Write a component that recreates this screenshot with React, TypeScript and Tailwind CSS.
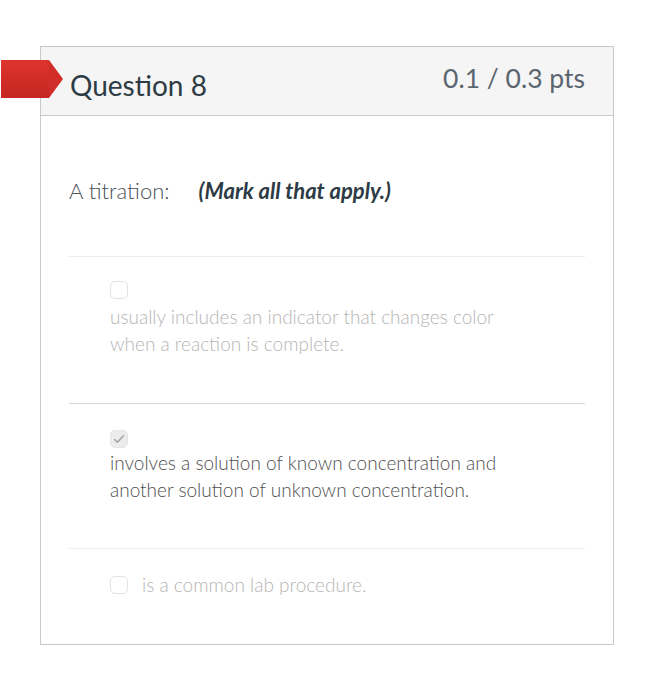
const font = { fontFamily: 'Lato, "Open Sans", sans-serif' };

interface BoxProps {
  checked?: boolean;
}

const Box = ({ checked }: BoxProps) => (
  <span
    className={
      'inline-flex h-[18px] w-[18px] shrink-0 items-center justify-center rounded-[5px] border ' +
      (checked ? 'border-[#e6e6e6] bg-[#ececec]' : 'border-[#e2e2e2] bg-white')
    }
  >
    {checked && (
      <svg viewBox="0 0 16 16" className="h-[14px] w-[14px]" fill="none" stroke="#a0a0a0" strokeWidth="1.6" strokeLinecap="round" strokeLinejoin="round">
        <path d="M3 8.5l3.2 3.3L13 4.2" />
      </svg>
    )}
  </span>
);

export default function App() {
  return (
    <div className="min-h-[700px] w-[668px] bg-white pt-[46px]" style={font}>
      <div className="relative ml-[40px] w-[574px] border border-[#c4c9cc]">
        <div className="absolute left-[-40px] top-[13px] flex h-[38px]">
          <div className="h-[38px] w-[48px] bg-gradient-to-b from-[#df342e] to-[#c42621]" />
          <div className="h-0 w-0 border-y-[19px] border-l-[14px] border-y-transparent border-l-[#d12d28]" />
        </div>
        <div className="flex h-[69px] items-center justify-between border-b border-[#c4c9cc] bg-[#f5f5f5] pl-[29px] pr-[28px]">
          <span className="mt-[7px] text-[28px] text-[#2d3b45]">Question 8</span>
          <span className="mt-[-4px] text-[26.5px] text-[#5b6670]">0.1 / 0.3 pts</span>
        </div>
        <div className="px-[28px]">
          <div className="pb-[50px] pt-[60px] text-[22px] leading-[30px] text-[#4a5157]">
            <span className="font-light">A titration:</span>
            <span className="ml-[29px] font-bold italic text-[#2d3b45]">(Mark all that apply.)</span>
          </div>
          <div className="border-t border-[#ececec] pb-[46px] pl-[41px] pt-[24px]">
            <Box />
            <p className="mt-[-2px] text-[19px] font-light leading-[27px] text-[#b5b5b5]">
              usually includes an indicator that changes color
              <br />
              when a reaction is complete.
            </p>
          </div>
          <div className="border-t border-[#d6d9db] pb-[45px] pl-[41px] pt-[24px]">
            <Box checked />
            <p className="mt-[-3px] text-[19px] font-light leading-[27px] text-[#4f4f4f]">
              involves a solution of known concentration and
              <br />
              another solution of unknown concentration.
            </p>
          </div>
          <div className="flex items-center gap-[14px] border-t border-[#ececec] pb-[46px] pl-[41px] pt-[22px]">
            <Box />
            <span className="text-[19px] font-light leading-[27px] text-[#b5b5b5]">is a common lab procedure.</span>
          </div>
        </div>
      </div>
    </div>
  );
}
